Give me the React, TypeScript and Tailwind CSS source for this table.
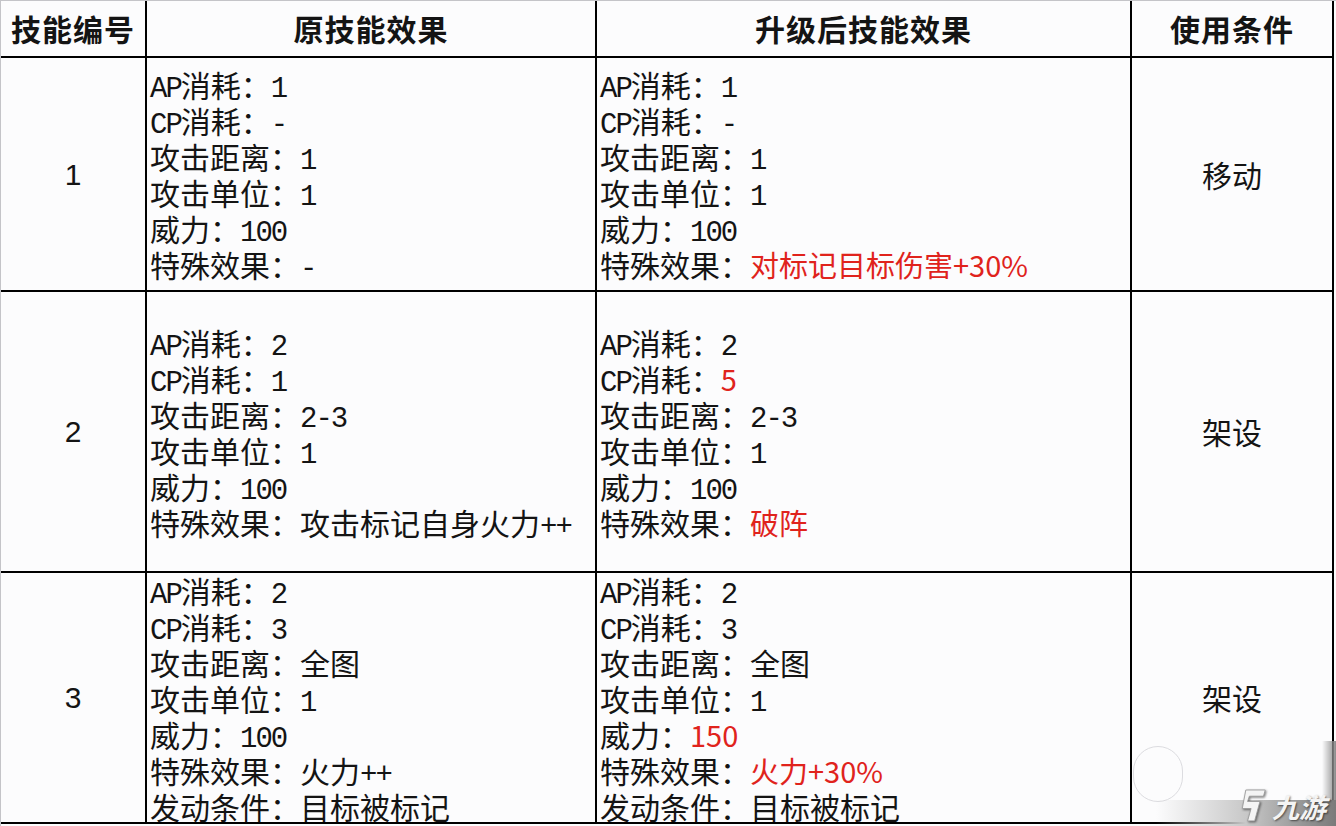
import React from 'react';

type Part = string | { red: string };
type Line = Part[];

const rows: { no: string; before: Line[]; after: Line[]; cond: string }[] = [
  {
    no: '1',
    before: [['AP消耗：1'], ['CP消耗：-'], ['攻击距离：1'], ['攻击单位：1'], ['威力：100'], ['特殊效果：-']],
    after: [
      ['AP消耗：1'],
      ['CP消耗：-'],
      ['攻击距离：1'],
      ['攻击单位：1'],
      ['威力：100'],
      ['特殊效果：', { red: '对标记目标伤害+30%' }],
    ],
    cond: '移动',
  },
  {
    no: '2',
    before: [['AP消耗：2'], ['CP消耗：1'], ['攻击距离：2-3'], ['攻击单位：1'], ['威力：100'], ['特殊效果：攻击标记自身火力++']],
    after: [
      ['AP消耗：2'],
      ['CP消耗：', { red: '5' }],
      ['攻击距离：2-3'],
      ['攻击单位：1'],
      ['威力：100'],
      ['特殊效果：', { red: '破阵' }],
    ],
    cond: '架设',
  },
  {
    no: '3',
    before: [
      ['AP消耗：2'],
      ['CP消耗：3'],
      ['攻击距离：全图'],
      ['攻击单位：1'],
      ['威力：100'],
      ['特殊效果：火力++'],
      ['发动条件：目标被标记'],
    ],
    after: [
      ['AP消耗：2'],
      ['CP消耗：3'],
      ['攻击距离：全图'],
      ['攻击单位：1'],
      ['威力：', { red: '150' }],
      ['特殊效果：', { red: '火力+30%' }],
      ['发动条件：目标被标记'],
    ],
    cond: '架设',
  },
];

// ascii runs get a mono face squeezed to half a CJK cell, like SimSun
const Mixed: React.FC<{ text: string }> = ({ text }) => {
  const runs = text.match(/[\x00-\x7f]+|[^\x00-\x7f]+/g) || [];
  return (
    <>
      {runs.map((r, i) =>
        /^[\x00-\x7f]/.test(r) ? (
          <span key={i} className="font-['Liberation_Mono'] text-[29px] tracking-[-2px]">
            {r}
          </span>
        ) : (
          <span key={i}>{r}</span>
        )
      )}
    </>
  );
};

const Effects: React.FC<{ lines: Line[] }> = ({ lines }) => (
  <div className="flex flex-col justify-center pl-[3px] border-r-2 border-b-2 border-black">
    {lines.map((line, i) => (
      <div key={i} className="h-[36px] leading-[36px] whitespace-nowrap">
        {line.map((p, j) =>
          typeof p === 'string' ? (
            <Mixed key={j} text={p} />
          ) : (
            <span key={j} className="text-[#e0231c] text-[29px]">
              {p.red}
            </span>
          )
        )}
      </div>
    ))}
  </div>
);

const cell = 'flex items-center justify-center border-r-2 border-b-2 border-black';
const head = `${cell} font-bold text-[30px] tracking-[1px]`;

export default function App() {
  return (
    <div className="relative w-[1336px] h-[826px] overflow-hidden bg-[#fcfcfd] border-l border-t border-[#c4c4c8] font-['Noto_Sans_CJK_SC',sans-serif] text-[30px] text-[#141414]">
      <div className="grid grid-cols-[146px_450px_535px_202px] grid-rows-[57px_234px_281px_251px]">
        <div className={head}>技能编号</div>
        <div className={head}>原技能效果</div>
        <div className={head}>升级后技能效果</div>
        <div className={head}>使用条件</div>
        {rows.map((r) => (
          <React.Fragment key={r.no}>
            <div className={`${cell} font-['Liberation_Sans']`}>{r.no}</div>
            <Effects lines={r.before} />
            <Effects lines={r.after} />
            <div className={cell}>{r.cond}</div>
          </React.Fragment>
        ))}
      </div>

      {/* watermark */}
      <div className="absolute left-[1132px] top-[745px] w-[50px] h-[56px] rounded-full border border-[#dcdce0]" />
      <div className="absolute right-0 top-[740px] w-[14px] h-[86px] bg-gradient-to-r from-transparent to-[#8c8c8c]" />
      <div className="absolute right-0 bottom-0 w-[180px] h-[26px] bg-gradient-to-r from-transparent via-[#c8c8c8] to-[#7a7a7a]" />
      <div className="absolute right-[10px] bottom-[3px] flex items-end gap-[5px]">
        <svg width="30" height="36" viewBox="0 0 34 40" className="drop-shadow-[1px_1px_1px_rgba(0,0,0,0.5)]">
          <path
            d="M10 3 H32 L30 10 H14 L12 16 H26 L20 38 H12 L16 24 H6 Z"
            fill="#f4f4f4"
            stroke="#9a9a9a"
            strokeWidth="1"
          />
        </svg>
        <span className="italic font-bold text-[27px] leading-[32px] text-[#f4f4f4] [text-shadow:1px_1px_2px_rgba(0,0,0,0.55)]">
          九游
        </span>
      </div>
    </div>
  );
}
